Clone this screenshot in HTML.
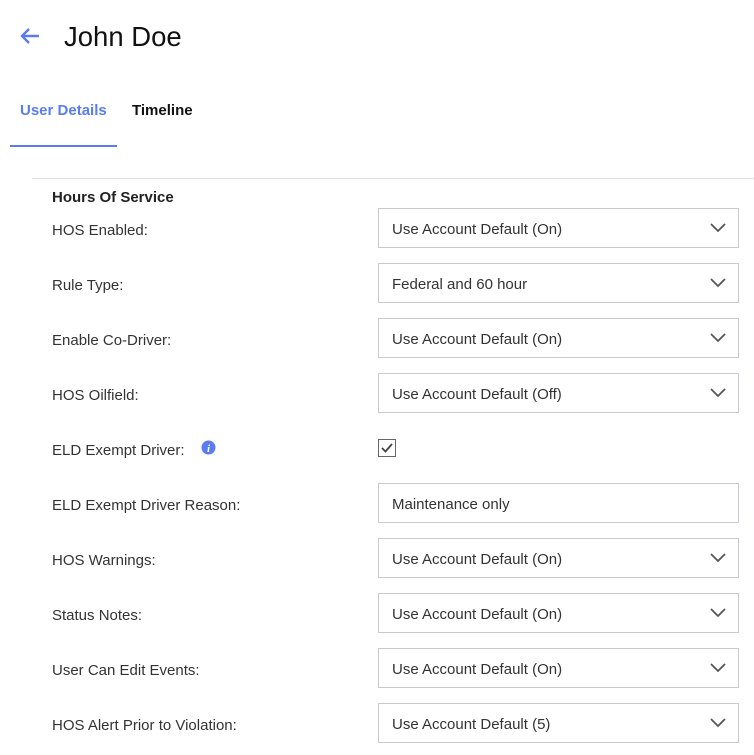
<!DOCTYPE html><html><head><style>
body{margin:0;width:754px;height:755px;background:#fff;font-family:"Liberation Sans",Arial,sans-serif;position:relative;overflow:hidden;color:#333}
.a{position:absolute}
.lbl{position:absolute;left:52px;font-size:15px;color:#333}
.box{position:absolute;left:378px;height:38px;border:1px solid #c9c9d4;box-sizing:content-box;font-size:15px;color:#333;line-height:41px;padding-left:13px;width:346px}
.box svg{position:absolute;right:12px;top:14px}
</style></head><body>
<svg class="a" style="left:19px;top:27px" width="22" height="18" viewBox="0 0 22 18"><path d="M20 9H3M10 2L3 9l7 7" stroke="#5b7cf0" stroke-width="2.4" fill="none"/></svg>
<div class="a" style="left:64px;top:21px;font-size:27.5px;color:#111">John Doe</div>
<div class="a" style="left:20px;top:102px;font-size:15px;font-weight:bold;color:#5b7cf0">User Details</div>
<div class="a" style="left:132px;top:102px;font-size:15px;font-weight:bold;color:#111">Timeline</div>
<div class="a" style="left:10px;top:145px;width:107px;height:2px;background:#5b7cf0"></div>
<div class="a" style="left:32px;top:178px;width:722px;height:1px;background:#e2e2e2"></div>
<div class="a" style="left:52px;top:189px;font-size:15px;font-weight:bold;color:#222">Hours Of Service</div>
<div class="lbl" style="top:222px">HOS Enabled:</div>
<div class="box" style="top:208px">Use Account Default (On)<svg width="16" height="10"><path d="M1 1l7 7 7-7" stroke="#555" stroke-width="1.8" fill="none"/></svg></div>
<div class="lbl" style="top:277px">Rule Type:</div>
<div class="box" style="top:263px">Federal and 60 hour<svg width="16" height="10"><path d="M1 1l7 7 7-7" stroke="#555" stroke-width="1.8" fill="none"/></svg></div>
<div class="lbl" style="top:332px">Enable Co-Driver:</div>
<div class="box" style="top:318px">Use Account Default (On)<svg width="16" height="10"><path d="M1 1l7 7 7-7" stroke="#555" stroke-width="1.8" fill="none"/></svg></div>
<div class="lbl" style="top:387px">HOS Oilfield:</div>
<div class="box" style="top:373px">Use Account Default (Off)<svg width="16" height="10"><path d="M1 1l7 7 7-7" stroke="#555" stroke-width="1.8" fill="none"/></svg></div>
<div class="lbl" style="top:442px">ELD Exempt Driver:</div>
<svg class="a" style="left:201px;top:440px" width="15" height="15"><circle cx="7.5" cy="7.5" r="7" fill="#5b7cf0"/><text x="7.5" y="12" font-size="11" font-style="italic" font-weight="bold" fill="#fff" text-anchor="middle" font-family="Liberation Serif">i</text></svg>
<svg class="a" style="left:378px;top:439px" width="19" height="19"><rect x="0.5" y="0.5" width="17" height="17" fill="#fff" stroke="#666"/><path d="M4 9l3.5 3.5L14 5" stroke="#444" stroke-width="1.8" fill="none"/></svg>
<div class="lbl" style="top:497px">ELD Exempt Driver Reason:</div>
<div class="box" style="top:483px">Maintenance only</div>
<div class="lbl" style="top:552px">HOS Warnings:</div>
<div class="box" style="top:538px">Use Account Default (On)<svg width="16" height="10"><path d="M1 1l7 7 7-7" stroke="#555" stroke-width="1.8" fill="none"/></svg></div>
<div class="lbl" style="top:607px">Status Notes:</div>
<div class="box" style="top:593px">Use Account Default (On)<svg width="16" height="10"><path d="M1 1l7 7 7-7" stroke="#555" stroke-width="1.8" fill="none"/></svg></div>
<div class="lbl" style="top:662px">User Can Edit Events:</div>
<div class="box" style="top:648px">Use Account Default (On)<svg width="16" height="10"><path d="M1 1l7 7 7-7" stroke="#555" stroke-width="1.8" fill="none"/></svg></div>
<div class="lbl" style="top:717px">HOS Alert Prior to Violation:</div>
<div class="box" style="top:703px">Use Account Default (5)<svg width="16" height="10"><path d="M1 1l7 7 7-7" stroke="#555" stroke-width="1.8" fill="none"/></svg></div>
</body></html>
